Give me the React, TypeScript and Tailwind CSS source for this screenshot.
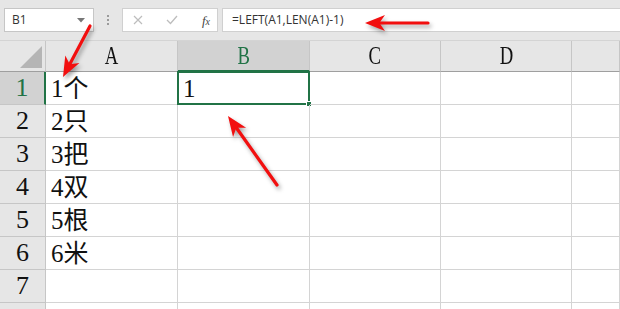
const COLS = [
  { key: "A", w: "w-[132px]" },
  { key: "B", w: "w-[132px]" },
  { key: "C", w: "w-[131px]" },
  { key: "D", w: "w-[131px]" },
  { key: "E", w: "w-[48px]" },
];

const DATA: Record<string, string> = {
  A1: "1个",
  A2: "2只",
  A3: "3把",
  A4: "4双",
  A5: "5根",
  A6: "6米",
  B1: "1",
};

const ROWS = [1, 2, 3, 4, 5, 6, 7, 8];

function Arrow({ x1, y1, x2, y2 }: { x1: number; y1: number; x2: number; y2: number }) {
  // tail (x1,y1) -> tip (x2,y2)
  const dx = x2 - x1;
  const dy = y2 - y1;
  const len = Math.hypot(dx, dy);
  const ux = dx / len;
  const uy = dy / len;
  const nx = -uy;
  const ny = ux;
  const L = 20;
  const W = 8;
  const bx = x2 - ux * L;
  const by = y2 - uy * L;
  const mx = x2 - ux * L * 0.72;
  const my = y2 - uy * L * 0.72;
  const pts = [
    [x2, y2],
    [bx + nx * W, by + ny * W],
    [mx, my],
    [bx - nx * W, by - ny * W],
  ]
    .map((p) => p.join(","))
    .join(" ");
  return (
    <g>
      <line x1={x1} y1={y1} x2={mx} y2={my} stroke="#f20f0f" strokeWidth={3.2} strokeLinecap="round" />
      <polygon points={pts} fill="#f20f0f" />
    </g>
  );
}

function ColHeader({ col, w }: { col: string; w: string }) {
  const selected = col === "B";
  return (
    <div
      className={`${w} h-full flex items-center justify-center border-r border-[#c6c6c6] ${
        selected ? "bg-[#d2d2d2] text-[#217346] border-b-2 border-b-[#217346]" : "border-b border-b-[#9f9f9f]"
      }`}
    >
      <span className="inline-block scale-x-[0.72] text-[26px] leading-none">{col !== "E" ? col : ""}</span>
    </div>
  );
}

export default function App() {
  return (
    <div className="relative w-[620px] h-[309px] overflow-hidden bg-white font-['Liberation_Serif','Noto_Sans_CJK_SC',serif] text-[#111]">
      {/* formula bar */}
      <div className="h-[41px] bg-[#e6e6e6] flex items-center pl-[4px] border-b border-[#d4d4d4] font-['Open_Sans','Liberation_Sans',sans-serif]">
        <div className="w-[90px] h-[24px] bg-white border border-[#c6c6c6] flex items-center justify-between pl-[7px] pr-[8px]">
          <span className="text-[12px] text-[#333]">B1</span>
          <svg width="8" height="5" viewBox="0 0 8 5">
            <path d="M0 0 L8 0 L4 4.5 Z" fill="#777" />
          </svg>
        </div>
        <div className="w-[28px] flex flex-col items-center gap-[2px]">
          <span className="w-[2px] h-[2px] bg-[#9a9a9a]" />
          <span className="w-[2px] h-[2px] bg-[#9a9a9a]" />
          <span className="w-[2px] h-[2px] bg-[#9a9a9a]" />
        </div>
        <div className="w-[96px] h-[24px] bg-white border border-[#d0d0d0] flex items-center justify-between pl-[10px] pr-[7px]">
          <svg width="10" height="10" viewBox="0 0 10 10">
            <path d="M1 1 L9 9 M9 1 L1 9" stroke="#bdbdbd" strokeWidth="1.2" />
          </svg>
          <svg width="12" height="10" viewBox="0 0 12 10">
            <path d="M1 5 L4.5 8.5 L11 1" stroke="#bdbdbd" strokeWidth="1.3" fill="none" />
          </svg>
          <span className="font-['Liberation_Serif',serif] italic text-[13px] text-[#444] leading-none">
            f<span className="text-[10px]">x</span>
          </span>
        </div>
        <div className="ml-[4px] flex-1 h-[24px] bg-white border border-[#d0d0d0] border-r-0 flex items-center pl-[9px]">
          <span className="text-[12px] text-[#333]">=LEFT(A1,LEN(A1)-1)</span>
        </div>
      </div>

      {/* column headers */}
      <div className="flex h-[31px] bg-[#e6e6e6]">
        <div className="w-[46px] h-full border-r border-b border-[#9f9f9f] border-r-[#c6c6c6] flex items-end justify-end pr-[3px] pb-[3px]">
          <svg width="22" height="22" viewBox="0 0 22 22">
            <path d="M22 0 L22 22 L0 22 Z" fill="#b5b5b5" />
          </svg>
        </div>
        {COLS.map((c) => (
          <ColHeader key={c.key} col={c.key} w={c.w} />
        ))}
      </div>

      {/* rows */}
      {ROWS.map((r) => (
        <div key={r} className="flex h-[33px]">
          <div
            className={`w-[46px] h-full flex items-center justify-center border-b border-[#c6c6c6] ${
              r === 1 ? "bg-[#d2d2d2] text-[#217346] border-r-2 border-r-[#217346]" : "bg-[#e6e6e6] border-r border-r-[#c6c6c6]"
            }`}
          >
            {/* row 8 is only a sliver at the bottom edge, its number is out of view */}
            <span className="text-[26px] leading-none">{r < 8 ? r : ""}</span>
          </div>
          {COLS.map((c) => {
            const id = `${c.key}${r}`;
            return (
              <div
                key={id}
                className={`${c.w} relative h-full border-r border-b border-[#d4d4d4] flex items-center pl-[5px]`}
              >
                <span className="text-[25px] leading-none whitespace-nowrap">{DATA[id] ?? ""}</span>
                {id === "B1" && (
                  <div className="absolute -left-[1px] -top-[1px] -right-[1px] -bottom-[1px] border-2 border-[#217346]">
                    <div className="absolute -right-[4px] -bottom-[4px] w-[6px] h-[6px] bg-[#217346] border border-white" />
                  </div>
                )}
              </div>
            );
          })}
        </div>
      ))}

      {/* annotation arrows */}
      <svg className="absolute inset-0 pointer-events-none drop-shadow-[2px_3px_2px_rgba(0,0,0,0.35)]" width="620" height="309">
        <Arrow x1={90} y1={26} x2={63} y2={77} />
        <Arrow x1={428} y1={23} x2={365} y2={23} />
        <Arrow x1={277} y1={185} x2={228} y2={116} />
      </svg>
    </div>
  );
}
